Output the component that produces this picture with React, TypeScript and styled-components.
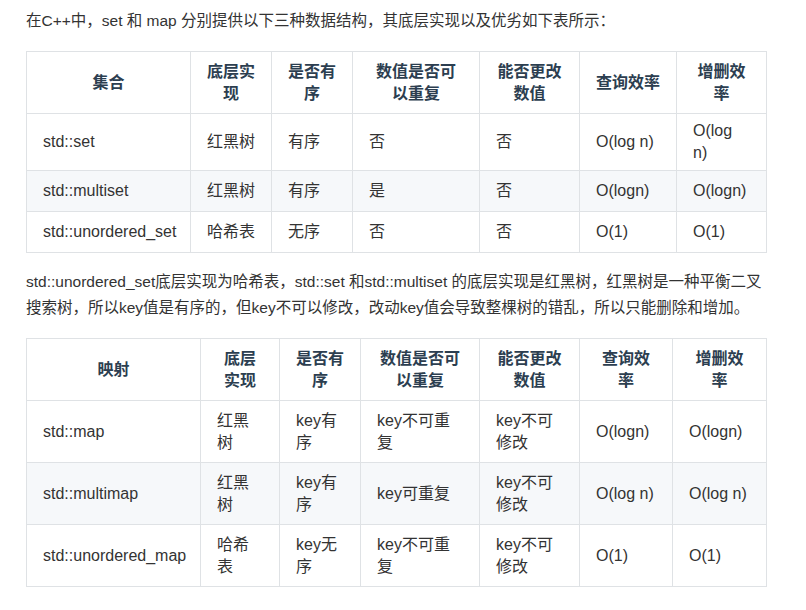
import React from "react";
import styled, { createGlobalStyle } from "styled-components";

const Global = createGlobalStyle`
  body { margin: 0; background: #fff; font-family: "Liberation Sans", "Noto Sans CJK SC", sans-serif; color: #333; }
`;
const Page = styled.div`padding: 8px 40px 0 26px; width: 740px;`;
const P = styled.p`margin: 0; font-size: 15.5px; line-height: 26px; color: #333;`;
const Table = styled.table<{ $mt: number; $mb: number }>`
  border-collapse: collapse; table-layout: fixed; width: 740px;
  margin: ${p => p.$mt}px 0 ${p => p.$mb}px; font-size: 16px; line-height: 22px;
`;
const Th = styled.th`
  border: 1px solid #dfe2e5; font-weight: bold; color: #2c3e50; text-align: center; padding: 6px 16px;
`;
const Tr = styled.tr<{ $alt?: boolean; $h: number }>`
  background: ${p => (p.$alt ? "#f6f8fa" : "#fff")};
  height: ${p => p.$h}px;
`;
const Td = styled.td<{ $first?: boolean }>`
  border: 1px solid #dfe2e5; padding: 6px 16px; color: #333;
  white-space: ${p => (p.$first ? "nowrap" : "normal")};
`;

const t1 = { w: [164, 81, 81, 127, 100, 97, 90], head: ["集合", "底层实现", "是否有序", "数值是否可以重复", "能否更改数值", "查询效率", "增删效率"],
  rows: [["std::set", "红黑树", "有序", "否", "否", "O(log n)", "O(log n)"],
    ["std::multiset", "红黑树", "有序", "是", "否", "O(logn)", "O(logn)"],
    ["std::unordered_set", "哈希表", "无序", "否", "否", "O(1)", "O(1)"]] };
const t2 = { w: [174, 79, 81, 119, 100, 93, 94], head: ["映射", "底层实现", "是否有序", "数值是否可以重复", "能否更改数值", "查询效率", "增删效率"],
  rows: [["std::map", "红黑树", "key有序", "key不可重复", "key不可修改", "O(logn)", "O(logn)"],
    ["std::multimap", "红黑树", "key有序", "key可重复", "key不可修改", "O(log n)", "O(log n)"],
    ["std::unordered_map", "哈希表", "key无序", "key不可重复", "key不可修改", "O(1)", "O(1)"]] };

function T({ d, h, mt, mb }: { d: typeof t1; h: number; mt: number; mb: number }) {
  return (
    <Table $mt={mt} $mb={mb}>
      <colgroup>{d.w.map((w, i) => <col key={i} style={{ width: w }} />)}</colgroup>
      <thead><Tr $h={62}>{d.head.map(x => <Th key={x}>{x}</Th>)}</Tr></thead>
      <tbody>{d.rows.map((r, i) => <Tr key={i} $h={h} $alt={i === 1}>{r.map((c, j) => <Td key={j} $first={j === 0}>{c}</Td>)}</Tr>)}</tbody>
    </Table>
  );
}

export default function App() {
  return (
    <Page>
      <Global />
      <P>在C++中，set 和 map 分别提供以下三种数据结构，其底层实现以及优劣如下表所示：</P>
      <T d={t1} h={41} mt={17} mb={16} />
      <P>std::unordered_set底层实现为哈希表，std::set 和std::multiset 的底层实现是红黑树，红黑树是一种平衡二叉搜索树，所以key值是有序的，但key不可以修改，改动key值会导致整棵树的错乱，所以只能删除和增加。</P>
      <T d={t2} h={62} mt={17} mb={0} />
    </Page>
  );
}
